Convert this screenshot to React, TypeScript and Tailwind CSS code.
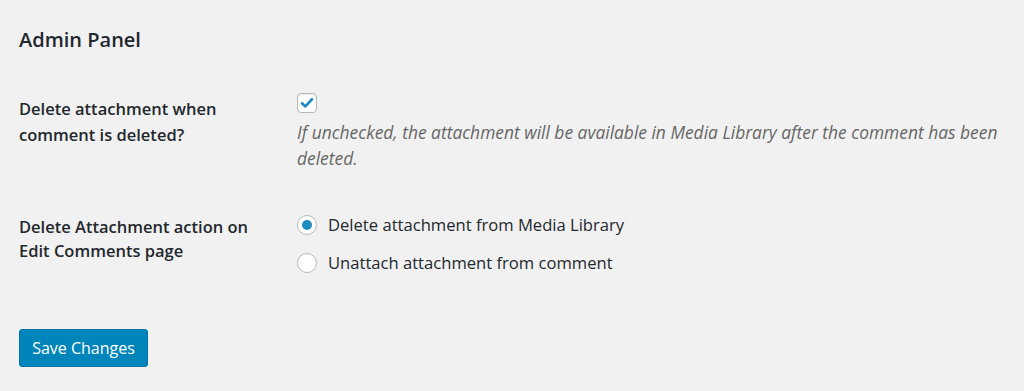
export default function App() {
  const font = { fontFamily: '"Open Sans", "Noto Sans", Arial, sans-serif' };
  return (
    <div className="min-h-[391px] w-full bg-[#f1f1f1] text-[#23282d] pl-[19px] pr-[20px]" style={font}>
      <h2 className="pt-[26px] text-[20px] leading-[28px] font-semibold">Admin Panel</h2>

      <div className="mt-[39px] flex">
        <div className="w-[278px] pt-[3px] text-[16.5px] leading-[26px] font-semibold">
          Delete attachment when
          <br />
          comment is deleted?
        </div>
        <div className="flex-1">
          <label className="flex h-[20px] w-[20px] items-center justify-center rounded-[4px] border border-[#b4b9be] bg-white shadow-[inset_0_1px_2px_rgba(0,0,0,0.1)]">
            <svg viewBox="0 0 20 20" className="h-[18px] w-[18px]">
              <path d="M4.5 10.2 L8.2 13.8 L15.5 5.8" fill="none" stroke="#1e8cbe" strokeWidth="3" strokeLinecap="round" strokeLinejoin="round" />
            </svg>
          </label>
          <p className="mt-[6px] text-[17.4px] leading-[26px] italic text-[#666]">
            If unchecked, the attachment will be available in Media Library after the comment has been deleted.
          </p>
        </div>
      </div>

      <div className="mt-[44px] flex">
        <div className="w-[278px] text-[16.5px] leading-[24px] font-semibold">
          Delete Attachment action on
          <br />
          Edit Comments page
        </div>
        <div className="flex flex-col gap-[18px] text-[16.6px] leading-[20px]">
          <label className="flex items-center gap-[11px]">
            <span className="flex h-[20px] w-[20px] items-center justify-center rounded-full border border-[#b4b9be] bg-white">
              <span className="h-[10px] w-[10px] rounded-full bg-[#1e8cbe]" />
            </span>
            Delete attachment from Media Library
          </label>
          <label className="flex items-center gap-[11px]">
            <span className="h-[20px] w-[20px] rounded-full border border-[#b4b9be] bg-white" />
            Unattach attachment from comment
          </label>
        </div>
      </div>

      <button className="mt-[56px] h-[38px] w-[129px] rounded-[3px] border border-[#0073aa] bg-[#0085ba] text-[16px] text-white">
        Save Changes
      </button>
    </div>
  );
}
